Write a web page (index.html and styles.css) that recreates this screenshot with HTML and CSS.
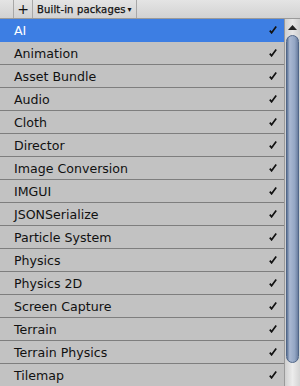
FILE: index.html
```html
<!DOCTYPE html>
<html>
<head>
<meta charset="utf-8">
<link rel="stylesheet" href="styles.css">
</head>
<body>
<div class="window">
  <div class="toolbar">
    <div class="tb-btn plus">+</div>
    <div class="tb-btn dropdown">Built-in packages <span class="caret">▾</span></div>
    <div class="tb-fill"></div>
  </div>
  <div class="content">
    <div class="list">
      <div class="row selected"><span class="name">AI</span><svg class="check" width="8" height="8" viewBox="0 0 8 8"><path d="M0.8 4.6 L2.6 6.8 L7.2 0.6" fill="none" stroke="#111" stroke-width="1.7"/></svg></div>
      <div class="row"><span class="name">Animation</span><svg class="check" width="8" height="8" viewBox="0 0 8 8"><path d="M0.8 4.6 L2.6 6.8 L7.2 0.6" fill="none" stroke="#111" stroke-width="1.7"/></svg></div>
      <div class="row"><span class="name">Asset Bundle</span><svg class="check" width="8" height="8" viewBox="0 0 8 8"><path d="M0.8 4.6 L2.6 6.8 L7.2 0.6" fill="none" stroke="#111" stroke-width="1.7"/></svg></div>
      <div class="row"><span class="name">Audio</span><svg class="check" width="8" height="8" viewBox="0 0 8 8"><path d="M0.8 4.6 L2.6 6.8 L7.2 0.6" fill="none" stroke="#111" stroke-width="1.7"/></svg></div>
      <div class="row"><span class="name">Cloth</span><svg class="check" width="8" height="8" viewBox="0 0 8 8"><path d="M0.8 4.6 L2.6 6.8 L7.2 0.6" fill="none" stroke="#111" stroke-width="1.7"/></svg></div>
      <div class="row"><span class="name">Director</span><svg class="check" width="8" height="8" viewBox="0 0 8 8"><path d="M0.8 4.6 L2.6 6.8 L7.2 0.6" fill="none" stroke="#111" stroke-width="1.7"/></svg></div>
      <div class="row"><span class="name">Image Conversion</span><svg class="check" width="8" height="8" viewBox="0 0 8 8"><path d="M0.8 4.6 L2.6 6.8 L7.2 0.6" fill="none" stroke="#111" stroke-width="1.7"/></svg></div>
      <div class="row"><span class="name">IMGUI</span><svg class="check" width="8" height="8" viewBox="0 0 8 8"><path d="M0.8 4.6 L2.6 6.8 L7.2 0.6" fill="none" stroke="#111" stroke-width="1.7"/></svg></div>
      <div class="row"><span class="name">JSONSerialize</span><svg class="check" width="8" height="8" viewBox="0 0 8 8"><path d="M0.8 4.6 L2.6 6.8 L7.2 0.6" fill="none" stroke="#111" stroke-width="1.7"/></svg></div>
      <div class="row"><span class="name">Particle System</span><svg class="check" width="8" height="8" viewBox="0 0 8 8"><path d="M0.8 4.6 L2.6 6.8 L7.2 0.6" fill="none" stroke="#111" stroke-width="1.7"/></svg></div>
      <div class="row"><span class="name">Physics</span><svg class="check" width="8" height="8" viewBox="0 0 8 8"><path d="M0.8 4.6 L2.6 6.8 L7.2 0.6" fill="none" stroke="#111" stroke-width="1.7"/></svg></div>
      <div class="row"><span class="name">Physics 2D</span><svg class="check" width="8" height="8" viewBox="0 0 8 8"><path d="M0.8 4.6 L2.6 6.8 L7.2 0.6" fill="none" stroke="#111" stroke-width="1.7"/></svg></div>
      <div class="row"><span class="name">Screen Capture</span><svg class="check" width="8" height="8" viewBox="0 0 8 8"><path d="M0.8 4.6 L2.6 6.8 L7.2 0.6" fill="none" stroke="#111" stroke-width="1.7"/></svg></div>
      <div class="row"><span class="name">Terrain</span><svg class="check" width="8" height="8" viewBox="0 0 8 8"><path d="M0.8 4.6 L2.6 6.8 L7.2 0.6" fill="none" stroke="#111" stroke-width="1.7"/></svg></div>
      <div class="row"><span class="name">Terrain Physics</span><svg class="check" width="8" height="8" viewBox="0 0 8 8"><path d="M0.8 4.6 L2.6 6.8 L7.2 0.6" fill="none" stroke="#111" stroke-width="1.7"/></svg></div>
      <div class="row"><span class="name">Tilemap</span><svg class="check" width="8" height="8" viewBox="0 0 8 8"><path d="M0.8 4.6 L2.6 6.8 L7.2 0.6" fill="none" stroke="#111" stroke-width="1.7"/></svg></div>
    </div>
    <div class="scrollbar">
      <div class="arrow"><svg width="9" height="5" viewBox="0 0 9 5"><path d="M0 5 L4.5 0 L9 5 Z" fill="#222"/></svg></div>
      <div class="track"><div class="thumb"></div></div>
    </div>
  </div>
</div>
</body>
</html>
```
FILE: styles.css
```css
html, body {
  margin: 0;
  padding: 0;
  width: 300px;
  height: 386px;
  overflow: hidden;
  background: #c2c2c2;
}
.window {
  display: flex;
  flex-direction: column;
  width: 300px;
  height: 386px;
  font-family: "DejaVu Sans", sans-serif;
}
.toolbar {
  display: flex;
  height: 18px;
  border-bottom: 1px solid #9a9a9a;
  background: linear-gradient(#e4e4e4, #d2d2d2);
  flex: none;
}
.tb-btn {
  display: flex;
  align-items: center;
  justify-content: center;
  border-right: 1px solid #a8a8a8;
  color: #111;
}
.plus {
  width: 18px;
  margin-left: 13px;
  border-left: 1px solid #a8a8a8;
  font-size: 14px;
}
.dropdown {
  width: 104px;
  justify-content: flex-start;
  padding-left: 4px;
  box-sizing: border-box;
  font-size: 10px;
  letter-spacing: 0.15px;
  -webkit-text-stroke: 0.25px #111;
}
.caret {
  font-size: 8px;
  margin-left: 2px;
  -webkit-text-stroke: 0;
}
.tb-fill {
  flex: 1;
}
.content {
  flex: 1;
  display: flex;
  min-height: 0;
}
.list {
  flex: 1;
  display: flex;
  flex-direction: column;
}
.row {
  flex: none;
  height: 22px;
  border-bottom: 1px solid #7e7e7e;
  display: flex;
  align-items: center;
  justify-content: space-between;
  padding: 0 7px 0 14px;
  font-size: 12.6px;
  color: #111;
  background: #c2c2c2;
}
.row.selected {
  background: #3d7ee3;
  color: #fff;
  border-bottom-color: #3d7ee3;
}
.check {
  flex: none;
}
.scrollbar {
  flex: none;
  width: 15px;
  display: flex;
  flex-direction: column;
  background: linear-gradient(90deg, #d0d0d0, #ececec 50%, #d4d4d4);
  border-left: 1px solid #9a9a9a;
}
.arrow {
  height: 16px;
  display: flex;
  align-items: center;
  justify-content: center;
  background: linear-gradient(90deg, #cfcfcf, #e6e6e6 50%, #cfcfcf);
}
.track {
  flex: 1;
  padding: 0 1px;
}
.thumb {
  height: 326px;
  border-radius: 7px;
  background: linear-gradient(90deg, #5c7294, #a9b8d2 25%, #93a6c4 70%, #6a7fa0);
  border: 1px solid #506688;
}
```
